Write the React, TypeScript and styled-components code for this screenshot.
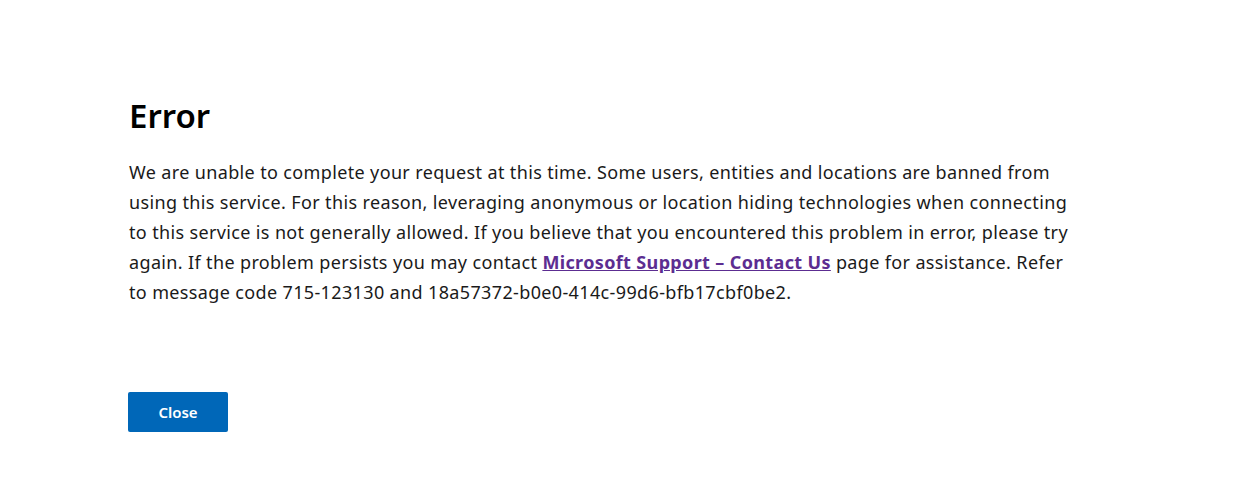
import React from "react";
import styled, { createGlobalStyle } from "styled-components";

const Global = createGlobalStyle`
  html, body { margin: 0; padding: 0; background: #fff; }
  body { font-family: "Segoe UI", "Noto Sans", "Open Sans", sans-serif; color: #000; }
`;

const Page = styled.main`
  display: flex;
  flex-direction: column;
  align-items: flex-start;
  padding: 94px 0 0 128px;
  width: 946px;
`;

const Title = styled.h1`
  margin: 0 0 19px 1px;
  font-size: 33px;
  line-height: 44px;
  font-weight: 600;
`;

const Message = styled.p`
  margin: 0 0 85px 1px;
  font-size: 18px;
  line-height: 30px;
  font-weight: 400;
  letter-spacing: 0.36px;
  color: #1a1a1a;
`;

const SupportLink = styled.a`
  color: #5c2d91;
  font-weight: 700;
  text-decoration: underline;
`;

const CloseButton = styled.button`
  width: 100px;
  height: 40px;
  border: none;
  border-radius: 2px;
  background: #0067b8;
  color: #fff;
  font-family: inherit;
  font-size: 15px;
  font-weight: 600;
  cursor: pointer;
`;

export default function App() {
  return (
    <>
      <Global />
      <Page>
        <Title>Error</Title>
        <Message>
          We are unable to complete your request at this time. Some users, entities and locations are banned from using
          this service. For this reason, leveraging anonymous or location hiding technologies when connecting to this
          service is not generally allowed. If you believe that you encountered this problem in error, please try again.
          If the problem persists you may contact <SupportLink href="#">Microsoft Support – Contact Us</SupportLink> page
          for assistance. Refer to message code 715-123130 and 18a57372-b0e0-414c-99d6-bfb17cbf0be2.
        </Message>
        <CloseButton>Close</CloseButton>
      </Page>
    </>
  );
}
